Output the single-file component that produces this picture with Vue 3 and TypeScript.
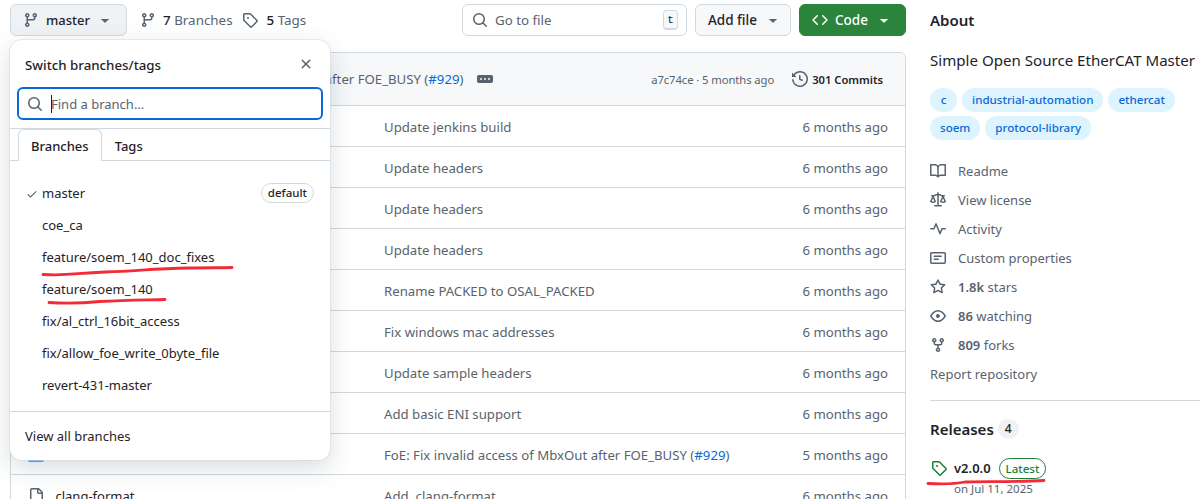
<script setup lang="ts">
import { ref } from 'vue'

interface FileRow {
  name: string
  message: string
  pr?: string
  age: string
}

interface SideLink {
  icon: string
  strong?: string
  label: string
}

const icons: Record<string, string> = {
  branch: 'M9.5 3.25a2.25 2.25 0 1 1 3 2.122V6A2.5 2.5 0 0 1 10 8.5H6a1 1 0 0 0-1 1v1.128a2.251 2.251 0 1 1-1.5 0V5.372a2.25 2.25 0 1 1 1.5 0v1.836A2.493 2.493 0 0 1 6 7h4a1 1 0 0 0 1-1v-.628A2.25 2.25 0 0 1 9.5 3.25Zm-6 0a.75.75 0 1 0 1.5 0 .75.75 0 0 0-1.5 0Zm8.25-.75a.75.75 0 1 0 0 1.5.75.75 0 0 0 0-1.5ZM4.25 12a.75.75 0 1 0 0 1.5.75.75 0 0 0 0-1.5Z',
  tag: 'M1 7.775V2.75C1 1.784 1.784 1 2.75 1h5.025c.464 0 .91.184 1.238.513l6.25 6.25a1.75 1.75 0 0 1 0 2.474l-5.026 5.026a1.75 1.75 0 0 1-2.474 0l-6.25-6.25A1.752 1.752 0 0 1 1 7.775Zm1.5 0c0 .066.026.13.073.177l6.25 6.25a.25.25 0 0 0 .354 0l5.025-5.025a.25.25 0 0 0 0-.354l-6.25-6.25a.25.25 0 0 0-.177-.073H2.75a.25.25 0 0 0-.25.25ZM6 5a1 1 0 1 1 0 2 1 1 0 0 1 0-2Z',
  search: 'M10.68 11.74a6 6 0 0 1-7.922-8.982 6 6 0 0 1 8.982 7.922l3.04 3.04a.749.749 0 0 1-.326 1.275.749.749 0 0 1-.734-.215ZM11.5 7a4.499 4.499 0 1 0-8.997 0A4.499 4.499 0 0 0 11.5 7Z',
  x: 'M3.72 3.72a.75.75 0 0 1 1.06 0L8 6.94l3.22-3.22a.749.749 0 0 1 1.275.326.749.749 0 0 1-.215.734L9.06 8l3.22 3.22a.749.749 0 0 1-.326 1.275.749.749 0 0 1-.734-.215L8 9.06l-3.22 3.22a.751.751 0 0 1-1.042-.018.751.751 0 0 1-.018-1.042L6.94 8 3.72 4.78a.75.75 0 0 1 0-1.06Z',
  check: 'M13.78 4.22a.75.75 0 0 1 0 1.06l-7.25 7.25a.75.75 0 0 1-1.06 0L2.22 9.28a.751.751 0 0 1 .018-1.042.751.751 0 0 1 1.042-.018L6 10.94l6.72-6.72a.75.75 0 0 1 1.06 0Z',
  code: 'm11.28 3.22 4.25 4.25a.75.75 0 0 1 0 1.06l-4.25 4.25a.749.749 0 0 1-1.275-.326.749.749 0 0 1 .215-.734L13.94 8l-3.72-3.72a.749.749 0 0 1 .326-1.275.749.749 0 0 1 .734.215Zm-6.56 0a.751.751 0 0 1 1.042.018.751.751 0 0 1 .018 1.042L2.06 8l3.72 3.72a.749.749 0 0 1-.326 1.275.749.749 0 0 1-.734-.215L.47 8.53a.75.75 0 0 1 0-1.06Z',
  caret: 'm4.427 7.427 3.396 3.396a.25.25 0 0 0 .354 0l3.396-3.396A.25.25 0 0 0 11.896 7H4.104a.25.25 0 0 0-.177.427Z',
  history: 'm.427 1.927 1.215 1.215a8.002 8.002 0 1 1-1.6 5.685.75.75 0 1 1 1.493-.154 6.5 6.5 0 1 0 1.18-4.458l1.358 1.358A.25.25 0 0 1 3.896 6H.25A.25.25 0 0 1 0 5.75V2.104a.25.25 0 0 1 .427-.177ZM7.75 4a.75.75 0 0 1 .75.75v2.992l2.028.812a.75.75 0 0 1-.557 1.392l-2.5-1A.751.751 0 0 1 7 8.25v-3.5A.75.75 0 0 1 7.75 4Z',
  book: 'M0 1.75A.75.75 0 0 1 .75 1h4.253c1.227 0 2.317.59 3 1.501A3.743 3.743 0 0 1 11.006 1h4.245a.75.75 0 0 1 .75.75v10.5a.75.75 0 0 1-.75.75h-4.507a2.25 2.25 0 0 0-1.591.659l-.622.621a.75.75 0 0 1-1.06 0l-.622-.621A2.25 2.25 0 0 0 5.258 13H.75a.75.75 0 0 1-.75-.75Zm7.251 10.324.004-5.073-.002-2.253A2.25 2.25 0 0 0 5.003 2.5H1.5v9h3.757a3.75 3.75 0 0 1 1.994.574ZM8.755 4.75l-.004 7.322a3.752 3.752 0 0 1 1.992-.572H14.5v-9h-3.495a2.25 2.25 0 0 0-2.25 2.25Z',
  law: 'M8.75.75V2h.985c.304 0 .603.08.867.231l1.29.736c.038.022.08.033.124.033h2.234a.75.75 0 0 1 0 1.5h-.427l2.111 4.692a.75.75 0 0 1-.154.838l-.53-.53.529.531-.001.002-.002.002-.006.006-.006.005-.01.01-.045.04c-.21.176-.441.327-.686.45C14.556 10.78 13.88 11 13 11a4.498 4.498 0 0 1-2.023-.454 3.544 3.544 0 0 1-.686-.45l-.045-.04-.016-.015-.006-.006-.004-.004v-.001a.75.75 0 0 1-.154-.838L12.178 4.5h-.162c-.305 0-.604-.079-.868-.231l-1.29-.736a.245.245 0 0 0-.124-.033H8.75V13h2.5a.75.75 0 0 1 0 1.5h-6.5a.75.75 0 0 1 0-1.5h2.5V3.5h-.984a.245.245 0 0 0-.124.033l-1.289.737c-.265.15-.564.23-.869.23h-.162l2.112 4.692a.75.75 0 0 1-.154.838l-.53-.53.529.531-.001.002-.002.002-.006.006-.016.015-.045.04c-.21.176-.441.327-.686.45C4.556 10.78 3.88 11 3 11a4.498 4.498 0 0 1-2.023-.454 3.544 3.544 0 0 1-.686-.45l-.045-.04-.016-.015-.006-.006-.004-.004v-.001a.75.75 0 0 1-.154-.838L2.178 4.5H1.75a.75.75 0 0 1 0-1.5h2.234a.249.249 0 0 0 .125-.033l1.288-.737c.265-.15.564-.23.869-.23h.984V.75a.75.75 0 0 1 1.5 0Zm2.945 8.477c.285.135.718.273 1.305.273s1.02-.138 1.305-.273L13 6.327Zm-10 0c.285.135.718.273 1.305.273s1.02-.138 1.305-.273L3 6.327Z',
  pulse: 'M6 2c.306 0 .582.187.696.471L10 10.731l1.304-3.26A.751.751 0 0 1 12 7h3.25a.75.75 0 0 1 0 1.5h-2.742l-1.812 4.528a.751.751 0 0 1-1.392 0L6 4.77 4.696 8.03A.75.75 0 0 1 4 8.5H.75a.75.75 0 0 1 0-1.5h2.742l1.812-4.529A.751.751 0 0 1 6 2Z',
  note: 'M0 3.75C0 2.784.784 2 1.75 2h12.5c.966 0 1.75.784 1.75 1.75v8.5A1.75 1.75 0 0 1 14.25 14H1.75A1.75 1.75 0 0 1 0 12.25Zm1.75-.25a.25.25 0 0 0-.25.25v8.5c0 .138.112.25.25.25h12.5a.25.25 0 0 0 .25-.25v-8.5a.25.25 0 0 0-.25-.25ZM3.5 6.25a.75.75 0 0 1 .75-.75h7a.75.75 0 0 1 0 1.5h-7a.75.75 0 0 1-.75-.75Zm.75 2.25h4a.75.75 0 0 1 0 1.5h-4a.75.75 0 0 1 0-1.5Z',
  star: 'M8 .25a.75.75 0 0 1 .673.418l1.882 3.815 4.21.612a.75.75 0 0 1 .416 1.279l-3.046 2.97.719 4.192a.751.751 0 0 1-1.088.791L8 12.347l-3.766 1.98a.75.75 0 0 1-1.088-.79l.72-4.194L.818 6.374a.75.75 0 0 1 .416-1.28l4.21-.611L7.327.668A.75.75 0 0 1 8 .25Zm0 2.445L6.615 5.5a.75.75 0 0 1-.564.41l-3.097.45 2.24 2.184a.75.75 0 0 1 .216.664l-.528 3.084 2.769-1.456a.75.75 0 0 1 .698 0l2.77 1.456-.53-3.084a.75.75 0 0 1 .216-.664l2.24-2.183-3.096-.45a.75.75 0 0 1-.564-.41L8 2.694Z',
  eye: 'M8 2c1.981 0 3.671.992 4.933 2.078 1.27 1.091 2.187 2.345 2.637 3.023a1.62 1.62 0 0 1 0 1.798c-.45.678-1.367 1.932-2.637 3.023C11.67 13.008 9.981 14 8 14c-1.981 0-3.671-.992-4.933-2.078C1.797 10.83.88 9.576.43 8.898a1.62 1.62 0 0 1 0-1.798c.45-.677 1.367-1.931 2.637-3.022C4.33 2.992 6.019 2 8 2ZM1.679 7.932a.12.12 0 0 0 0 .136c.411.622 1.241 1.75 2.366 2.717C5.176 11.758 6.527 12.5 8 12.5c1.473 0 2.825-.742 3.955-1.715 1.124-.967 1.954-2.096 2.366-2.717a.12.12 0 0 0 0-.136c-.412-.621-1.242-1.75-2.366-2.717C10.824 4.242 9.473 3.5 8 3.5c-1.473 0-2.825.742-3.955 1.715-1.124.967-1.954 2.096-2.366 2.717ZM8 10a2 2 0 1 1-.001-3.999A2 2 0 0 1 8 10Z',
  fork: 'M5 5.372v.878c0 .414.336.75.75.75h4.5a.75.75 0 0 0 .75-.75v-.878a2.25 2.25 0 1 1 1.5 0v.878a2.25 2.25 0 0 1-2.25 2.25h-1.5v2.128a2.251 2.251 0 1 1-1.5 0V8.5h-1.5A2.25 2.25 0 0 1 3.5 6.25v-.878a2.25 2.25 0 1 1 1.5 0ZM5 3.25a.75.75 0 1 0-1.5 0 .75.75 0 0 0 1.5 0Zm6.75.75a.75.75 0 1 0 0-1.5.75.75 0 0 0 0 1.5Zm-3 8.75a.75.75 0 1 0-1.5 0 .75.75 0 0 0 1.5 0Z',
  ellipsis: 'M0 5.75C0 4.784.784 4 1.75 4h12.5c.966 0 1.75.784 1.75 1.75v4.5A1.75 1.75 0 0 1 14.25 12H1.75A1.75 1.75 0 0 1 0 10.25ZM12 7a1 1 0 1 0 0 2 1 1 0 0 0 0-2ZM7 8a1 1 0 1 0 2 0 1 1 0 0 0-2 0ZM4 7a1 1 0 1 0 0 2 1 1 0 0 0 0-2Z',
  file: 'M2 1.75C2 .784 2.784 0 3.75 0h6.586c.464 0 .909.184 1.237.513l2.914 2.914c.329.328.513.773.513 1.237v9.586A1.75 1.75 0 0 1 13.25 16h-9.5A1.75 1.75 0 0 1 2 14.25Zm1.75-.25a.25.25 0 0 0-.25.25v12.5c0 .138.112.25.25.25h9.5a.25.25 0 0 0 .25-.25V6h-2.75A1.75 1.75 0 0 1 9 4.25V1.5Zm6.75.062V4.25c0 .138.112.25.25.25h2.688l-.011-.013-2.914-2.914-.013-.011Z',
  folder: 'M1.75 1A1.75 1.75 0 0 0 0 2.75v10.5C0 14.216.784 15 1.75 15h12.5A1.75 1.75 0 0 0 16 13.25v-8.5A1.75 1.75 0 0 0 14.25 3H7.5a.25.25 0 0 1-.2-.1l-.9-1.2C6.07 1.26 5.55 1 5 1H1.75Z',
}

const rows: FileRow[] = [
  { name: '', message: 'Update jenkins build', age: '6 months ago' },
  { name: '', message: 'Update headers', age: '6 months ago' },
  { name: '', message: 'Update headers', age: '6 months ago' },
  { name: '', message: 'Update headers', age: '6 months ago' },
  { name: '', message: 'Rename PACKED to OSAL_PACKED', age: '6 months ago' },
  { name: '', message: 'Fix windows mac addresses', age: '6 months ago' },
  { name: '', message: 'Update sample headers', age: '6 months ago' },
  { name: '', message: 'Add basic ENI support', age: '6 months ago' },
  { name: '', message: 'FoE: Fix invalid access of MbxOut after FOE_BUSY (', pr: '#929', age: '5 months ago' },
  { name: '.clang-format', message: 'Add .clang-format', age: '6 months ago' },
]

const branches = [
  'master',
  'coe_ca',
  'feature/soem_140_doc_fixes',
  'feature/soem_140',
  'fix/al_ctrl_16bit_access',
  'fix/allow_foe_write_0byte_file',
  'revert-431-master',
]

const topics = ['c', 'industrial-automation', 'ethercat', 'soem', 'protocol-library']

const sideLinks: SideLink[] = [
  { icon: 'book', label: 'Readme' },
  { icon: 'law', label: 'View license' },
  { icon: 'pulse', label: 'Activity' },
  { icon: 'note', label: 'Custom properties' },
  { icon: 'star', strong: '1.8k', label: 'stars' },
  { icon: 'eye', strong: '86', label: 'watching' },
  { icon: 'fork', strong: '809', label: 'forks' },
]

const current = ref('master')
</script>

<template>
  <div class="page">
    <main class="main">
      <div class="toolbar">
        <button class="btn branch-btn">
          <svg class="icon muted" viewBox="0 0 16 16"><path :d="icons.branch" /></svg>
          <span class="branch-name">master</span>
          <svg class="icon muted caret" viewBox="0 0 16 16"><path :d="icons.caret" /></svg>
        </button>
        <a class="count count-branches">
          <svg class="icon muted" viewBox="0 0 16 16"><path :d="icons.branch" /></svg>
          <span><b>7</b> Branches</span>
        </a>
        <a class="count count-tags">
          <svg class="icon muted" viewBox="0 0 16 16"><path :d="icons.tag" /></svg>
          <span><b>5</b> Tags</span>
        </a>
        <div class="goto">
          <svg class="icon muted" viewBox="0 0 16 16"><path :d="icons.search" /></svg>
          <span class="goto-text">Go to file</span>
          <kbd class="kbd">t</kbd>
        </div>
        <button class="btn add-btn">
          Add file
          <svg class="icon muted caret" viewBox="0 0 16 16"><path :d="icons.caret" /></svg>
        </button>
        <button class="btn code-btn">
          <svg class="icon" viewBox="0 0 16 16"><path :d="icons.code" /></svg>
          Code
          <svg class="icon caret" viewBox="0 0 16 16"><path :d="icons.caret" /></svg>
        </button>
      </div>

      <div class="files">
        <div class="commit-head">
          <span class="commit-msg">FoE: Fix invalid access of MbxOut after FOE_BUSY (<a class="link">#929</a>)</span>
          <svg class="icon muted dots" viewBox="0 0 16 16"><path :d="icons.ellipsis" /></svg>
          <span class="sha">a7c74ce · 5 months ago</span>
          <svg class="icon muted" viewBox="0 0 16 16"><path :d="icons.history" /></svg>
          <span class="commits">301 Commits</span>
        </div>
        <div v-for="(row, i) in rows" :key="i" class="file-row">
          <div class="file-name">
            <svg v-if="row.name" class="icon muted" viewBox="0 0 16 16"><path :d="icons.file" /></svg>
            <svg v-else class="icon folder" viewBox="0 0 16 16"><path :d="icons.folder" /></svg>
            <span>{{ row.name }}</span>
          </div>
          <div class="file-msg">{{ row.message }}<template v-if="row.pr"><a class="link">{{ row.pr }}</a>)</template></div>
          <div class="file-age">{{ row.age }}</div>
        </div>
      </div>

      <div class="popup">
        <div class="popup-head">
          <span>Switch branches/tags</span>
          <svg class="icon muted" viewBox="0 0 16 16"><path :d="icons.x" /></svg>
        </div>
        <div class="find">
          <svg class="icon muted" viewBox="0 0 16 16"><path :d="icons.search" /></svg>
          <span class="cursor"></span>
          <span class="find-text">Find a branch...</span>
        </div>
        <div class="tabs">
          <span class="tab active">Branches</span>
          <span class="tab">Tags</span>
        </div>
        <ul class="branch-list">
          <li v-for="b in branches" :key="b" class="branch-item">
            <span class="check-slot">
              <svg v-if="b === current" class="icon check" viewBox="0 0 16 16"><path :d="icons.check" /></svg>
            </span>
            <span>{{ b }}</span>
            <span v-if="b === current" class="default-badge">default</span>
          </li>
        </ul>
        <div class="popup-foot">View all branches</div>
      </div>
    </main>

    <aside class="side">
      <h2 class="side-title">About</h2>
      <p class="desc">Simple Open Source EtherCAT Master</p>
      <div class="topics">
        <a v-for="t in topics" :key="t" class="topic">{{ t }}</a>
      </div>
      <ul class="side-links">
        <li v-for="l in sideLinks" :key="l.label" class="side-link">
          <svg class="icon muted" viewBox="0 0 16 16"><path :d="icons[l.icon]" /></svg>
          <span><b v-if="l.strong">{{ l.strong }}</b>{{ l.strong ? ' ' : '' }}{{ l.label }}</span>
        </li>
      </ul>
      <a class="report">Report repository</a>
      <div class="side-rule"></div>
      <h2 class="side-title releases">Releases <span class="counter">4</span></h2>
      <div class="release">
        <svg class="icon tag-green" viewBox="0 0 16 16"><path :d="icons.tag" /></svg>
        <b class="version">v2.0.0</b>
        <span class="latest">Latest</span>
      </div>
      <div class="release-date">on Jul 11, 2025</div>
    </aside>

    <!-- red marker strokes drawn over the screenshot -->
    <svg class="marks" width="1200" height="499" viewBox="0 0 1200 499">
      <path d="M43 274.500 C70 276 75 273 105 272 C140 271 150 268.500 190 268 C210 267.500 222 268 232 267.500" />
      <path d="M49 302.500 C70 304 85 303 100 301.500 C125 300 145 300 165 299.500" />
      <path d="M928 483.500 C950 484.500 960 483 965 482 C990 481.500 1020 482 1044 480.500" />
    </svg>
  </div>
</template>

<style>
html,
body {
  margin: 0;
  background: #fff;
}
</style>

<style scoped>
.page {
  position: relative;
  display: flex;
  width: 1200px;
  height: 499px;
  overflow: hidden;
  padding: 4px 0 0 10px;
  box-sizing: border-box;
  gap: 24px;
  font-family: "Noto Sans", "Open Sans", sans-serif;
  font-size: 13px;
  color: #1f2328;
}

.icon {
  width: 16px;
  height: 16px;
  flex: none;
  fill: currentColor;
}

.muted {
  color: #59636e;
}

.link {
  color: #0969da;
}

.main {
  width: 896px;
  flex: none;
}

.toolbar {
  display: flex;
  align-items: center;
  height: 32px;
}

.btn {
  display: flex;
  align-items: center;
  height: 32px;
  box-sizing: border-box;
  border: 1px solid #d1d9e0;
  border-radius: 6px;
  background: #f6f8fa;
  font: inherit;
  font-size: 13.500px;
  font-weight: 500;
  color: #1f2328;
  padding: 0;
}

.branch-btn {
  width: 117px;
  padding-left: 12px;
  background: #eff2f5;
}

.branch-name {
  margin-left: 7px;
  font-size: 13px;
}

.branch-btn .caret {
  margin-left: auto;
  margin-right: 13px;
}

.count {
  display: flex;
  align-items: center;
  gap: 7px;
  font-size: 13.400px;
  color: #59636e;
}

.count-branches {
  margin-left: 13px;
}

.count-tags {
  margin-left: 9px;
  gap: 9px;
}

.count b {
  color: #1f2328;
  font-weight: 500;
}

.goto {
  display: flex;
  align-items: center;
  width: 225px;
  height: 32px;
  box-sizing: border-box;
  margin-left: auto;
  padding: 0 8px 0 9px;
  border: 1px solid #d1d9e0;
  border-radius: 6px;
  font-size: 13.300px;
  color: #59636e;
}

.goto-text {
  margin-left: 7px;
}

.kbd {
  margin-left: auto;
  width: 15px;
  height: 20px;
  line-height: 18px;
  box-sizing: border-box;
  border: 1px solid #d1d9e0;
  border-bottom-width: 2px;
  border-radius: 4px;
  background: #f6f8fa;
  text-align: center;
  font-family: "Liberation Mono", monospace;
  font-size: 11px;
  color: #1f2328;
}

.add-btn {
  width: 96px;
  margin-left: 8px;
  padding-left: 12px;
}

.add-btn .caret {
  margin-left: auto;
  margin-right: 9px;
}

.code-btn {
  width: 107px;
  margin-left: 8px;
  padding-left: 12px;
  gap: 7px;
  background: #2a843c;
  border-color: #2a843c;
  color: #fff;
}

.code-btn .caret {
  margin-left: auto;
  margin-right: 13px;
}

.files {
  margin-top: 16px;
  border: 1px solid #d1d9e0;
  border-radius: 6px;
  height: 600px;
}

.commit-head {
  display: flex;
  align-items: center;
  height: 52px;
  padding: 0 22px 0 107px;
  background: #f6f8fa;
  border-bottom: 1px solid #d1d9e0;
  border-radius: 6px 6px 0 0;
  font-size: 13.200px;
  color: #59636e;
}

.dots {
  margin-left: 14px;
}

.sha {
  margin-left: auto;
  margin-right: 18px;
  font-size: 11.300px;
  letter-spacing: -0.1px;
}

.commits {
  margin-left: 4px;
  font-size: 11.200px;
  font-weight: 600;
  color: #1f2328;
}

.file-row {
  display: grid;
  grid-template-columns: 356px 1fr auto;
  align-items: center;
  height: 41px;
  box-sizing: border-box;
  padding: 2px 17px 0 17px;
  border-bottom: 1px solid #d1d9e0;
  font-size: 13.200px;
  color: #59636e;
}

.file-name {
  display: flex;
  align-items: center;
  gap: 8px;
  font-size: 13px;
  color: #1f2328;
}

.folder {
  color: #54aeff;
}

.popup {
  position: absolute;
  left: 10px;
  top: 40px;
  width: 320px;
  height: 420px;
  box-sizing: border-box;
  background: #fff;
  border-radius: 12px;
  box-shadow: 0 0 0 1px rgba(209, 217, 224, 0.5), 0 8px 24px rgba(66, 74, 83, 0.2);
  z-index: 2;
}

.popup-head {
  display: flex;
  align-items: center;
  justify-content: space-between;
  height: 47px;
  box-sizing: border-box;
  padding: 3px 16px 0 15px;
  font-size: 13.300px;
  font-weight: 500;
}

.popup-head .icon {
  margin-top: -3px;
}

.find {
  display: flex;
  align-items: center;
  height: 33px;
  margin: 0 7px;
  padding-left: 8px;
  box-sizing: border-box;
  border: 2px solid #0969da;
  border-radius: 6px;
  color: #59636e;
}

.cursor {
  width: 1px;
  height: 18px;
  margin-left: 8px;
  background: #1f2328;
}

.find-text {
  margin-left: -1px;
}

.tabs {
  display: flex;
  height: 33px;
  margin-top: 8px;
  padding-left: 8px;
  box-sizing: border-box;
  border-top: 1px solid #d1d9e0;
  border-bottom: 1px solid #d1d9e0;
}

.tab {
  display: flex;
  align-items: center;
  height: 32px;
  box-sizing: border-box;
  padding: 1px 13px 0;
  font-weight: 500;
}

.tab.active {
  padding: 1px 12px 0;
  background: #fff;
  border: 1px solid #d1d9e0;
  border-bottom: 0;
  border-radius: 6px 6px 0 0;
}

.branch-list {
  list-style: none;
  margin: 0;
  padding: 16px 0 10px;
  border-bottom: 1px solid #d1d9e0;
}

.branch-item {
  display: flex;
  align-items: center;
  height: 32px;
  padding: 0 16px;
  color: #1f2328;
}

.check-slot {
  display: flex;
  width: 16px;
  flex: none;
}

.check {
  width: 12px;
  height: 12px;
  margin-top: 2px;
  color: #59636e;
}

.default-badge {
  margin-left: auto;
  height: 20px;
  line-height: 18px;
  padding: 0 6px;
  box-sizing: border-box;
  border: 1px solid #d1d9e0;
  border-radius: 10px;
  font-size: 11.500px;
  font-weight: 500;
}

.popup-foot {
  padding: 15px 15px;
  line-height: 18px;
}

.side {
  width: 296px;
  flex: none;
  padding-top: 6px;
}

.side-title {
  margin: 0;
  font-size: 15px;
  line-height: 20px;
  font-weight: 600;
}

.desc {
  margin: 18px 0 0;
  font-size: 15.100px;
  line-height: 24px;
  white-space: nowrap;
}

.topics {
  display: flex;
  flex-wrap: wrap;
  gap: 4px 5px;
  width: 260px;
  margin-top: 16px;
}

.topic {
  min-width: 27px;
  height: 24px;
  line-height: 24px;
  box-sizing: border-box;
  padding: 0 10px;
  border-radius: 12px;
  background: #ddf4ff;
  color: #0969da;
  font-size: 11.600px;
  font-weight: 500;
  text-align: center;
}

.side-links {
  list-style: none;
  margin: 16px 0 0;
  padding: 0;
}

.side-link {
  display: flex;
  align-items: center;
  gap: 12px;
  height: 29px;
  color: #59636e;
}

.side-link b {
  font-weight: 600;
}

.report {
  display: block;
  margin-top: 1px;
  line-height: 29px;
  color: #59636e;
}

.side-rule {
  height: 1px;
  margin-top: 11px;
  background: #d1d9e0;
}

.releases {
  display: flex;
  align-items: center;
  gap: 4px;
  margin-top: 18px;
}

.counter {
  display: inline-block;
  width: 21px;
  height: 20px;
  line-height: 20px;
  border-radius: 10px;
  background: #eff1f3;
  text-align: center;
  font-size: 12px;
  font-weight: 500;
}

.release {
  display: flex;
  align-items: center;
  margin-top: 18px;
  height: 22px;
}

.tag-green {
  color: #1a7f37;
  margin-left: 1px;
}

.version {
  margin-left: 7px;
  font-weight: 600;
}

.latest {
  height: 21px;
  line-height: 19px;
  box-sizing: border-box;
  margin-left: 8px;
  padding: 0 6px;
  border: 1px solid #1a7f37;
  border-radius: 11px;
  color: #1a7f37;
  font-size: 11.500px;
  font-weight: 500;
}

.release-date {
  margin: 2px 0 0 24px;
  font-size: 11.500px;
  color: #59636e;
}

.marks {
  position: absolute;
  left: 0;
  top: 0;
  z-index: 3;
  pointer-events: none;
}

.marks path {
  fill: none;
  stroke: #f22b36;
  stroke-width: 2.800px;
  stroke-linecap: round;
}
</style>
